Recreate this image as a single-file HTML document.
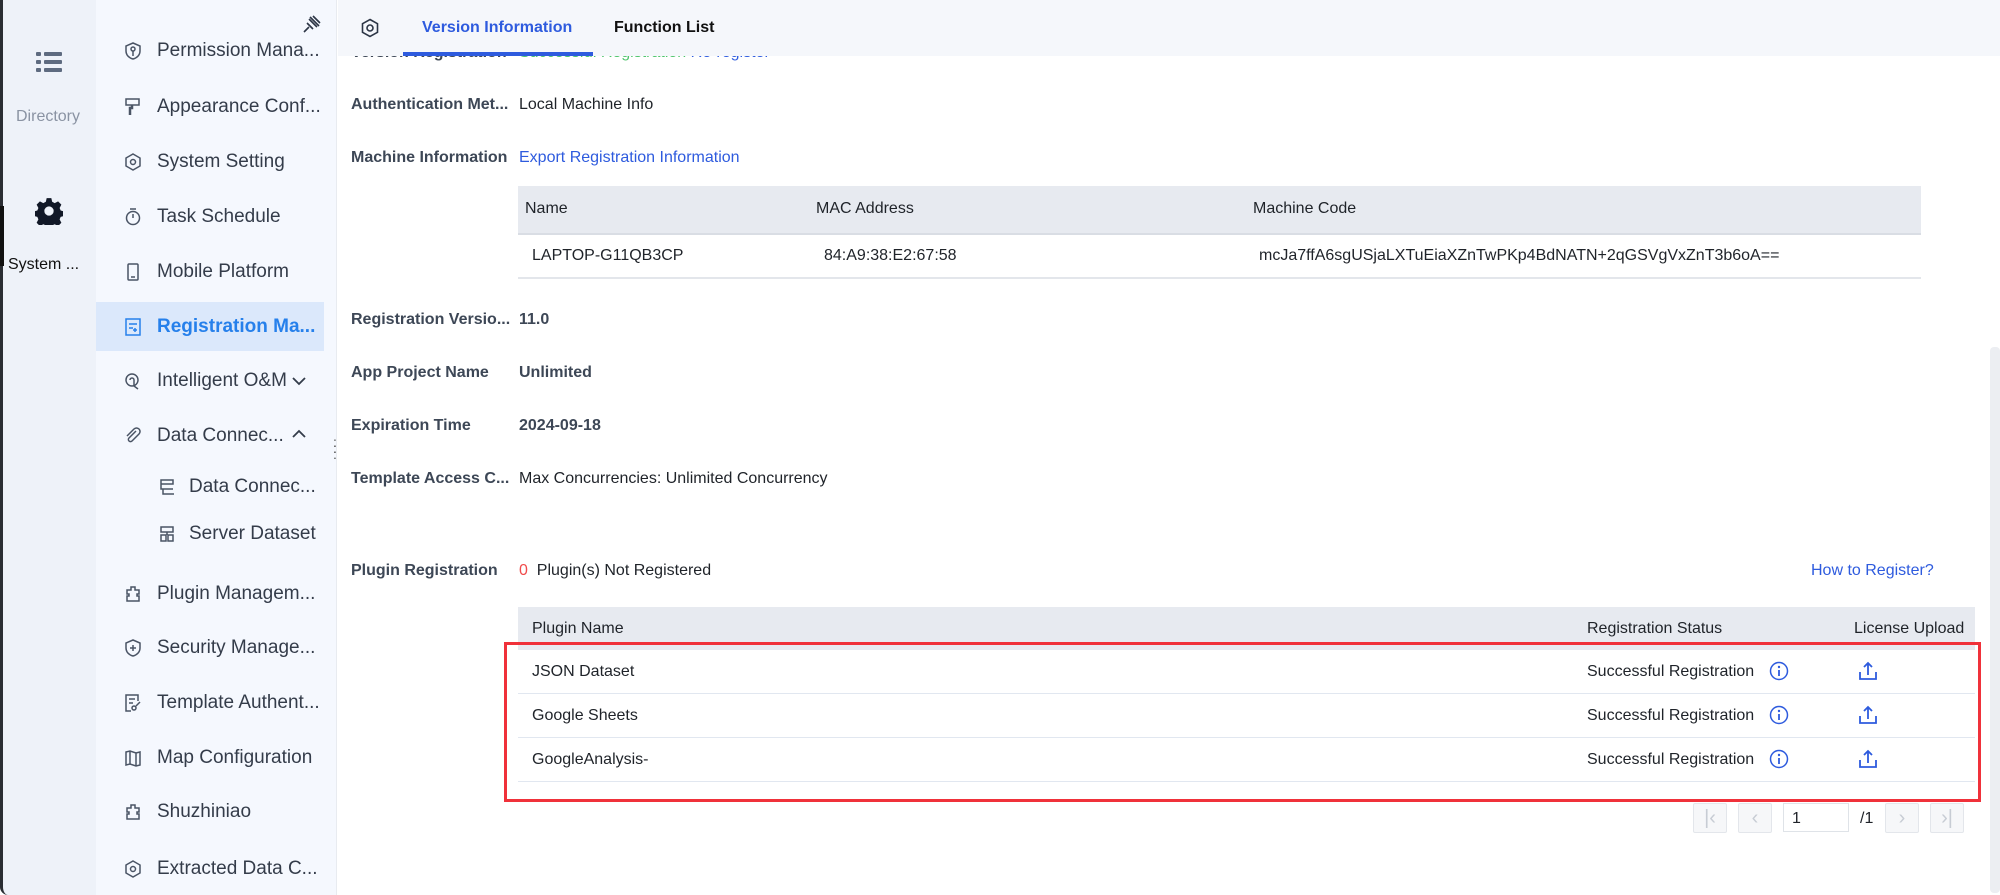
<!DOCTYPE html>
<html><head><meta charset="utf-8"><style>
*{box-sizing:border-box;margin:0;padding:0}
body{width:2000px;height:895px;overflow:hidden;background:#fff;font-family:"Liberation Sans",Arial,sans-serif;position:relative;color:#1f2329}
.abs{position:absolute;white-space:nowrap}
.rail{position:absolute;left:0;top:0;width:96px;height:895px;background:#eef2f9;border-left:3px solid #2a2d33;border-radius:0 0 0 8px}
.side{position:absolute;left:96px;top:0;width:241px;height:895px;background:#f5f8fe;border-right:1px solid #e8ebf0}
.si{position:absolute;left:0;width:241px;height:30px;font-size:19px;color:#343c4a;line-height:30px}
.si .t{position:absolute;left:61px}
.si svg{position:absolute;left:28px;top:6px}
.si.sub .t{left:93px}
.si.sub svg{left:62px}
.top{position:absolute;left:338px;top:0;width:1662px;height:56px;background:#f5f7fb;z-index:2}
.lab{position:absolute;left:351px;font-size:16px;color:#3d4756;font-weight:bold;white-space:nowrap}
.val{position:absolute;left:519px;font-size:16px;color:#1f2329;white-space:nowrap}
.blue{color:#2e5bde}
.th{position:absolute;font-size:16px;color:#1f2329;white-space:nowrap}
.pb{position:absolute;top:803px;width:34px;height:30px;border:1px solid #e3e6eb;background:#f6f7f9;border-radius:2px;color:#c7ccd4;font-size:20px;text-align:center;line-height:28px}
</style></head><body>
<div class="rail">
 <svg class="abs" style="left:33px;top:52px" width="26" height="20" viewBox="0 0 26 20"><g fill="#5e6b80"><rect x="0" y="0" width="5" height="4" rx="1"/><rect x="8" y="0" width="18" height="4" rx="1"/><rect x="0" y="8" width="5" height="4" rx="1"/><rect x="8" y="8" width="18" height="4" rx="1"/><rect x="0" y="16" width="5" height="4" rx="1"/><rect x="8" y="16" width="18" height="4" rx="1"/></g></svg>
 <div class="abs" style="left:13px;top:108px;font-size:16px;color:#8a93a3">Directory</div>
 <div class="abs" style="left:-3px;top:206px;width:4px;height:60px;background:#111"></div>
 <svg class="abs" style="left:32px;top:197px" width="28" height="28" viewBox="0 0 24 24"><path fill="#111827" d="M10 1h4l.7 3.1 2.2 1.1 2.9-1.5 2.8 2.8-1.5 2.9.9 2.2 3 .7v4l-3 .7-.9 2.2 1.5 2.9-2.8 2.8-2.9-1.5-2.2.9-.7 3.1h-4l-.7-3.1-2.2-.9-2.9 1.5-2.8-2.8 1.5-2.9-.9-2.2-3-.7v-4l3-.7.9-2.2-1.5-2.9 2.8-2.8 2.9 1.5 2.2-1.1zM12 8a4 4 0 1 0 0 8 4 4 0 1 0 0-8z"/></svg>
 <div class="abs" style="left:5px;top:256px;font-size:16px;color:#111">System ...</div>
</div>
<div class="side">
 <svg class="abs" style="left:206px;top:14px" width="20" height="20" viewBox="0 0 20 20"><g fill="none" stroke="#2c3545" stroke-width="1.6"><path d="M8 3l9 9M5 9l6 6M7 5l8 8M2 18l5-5M11 2l7 7"/></g></svg>
 <div class="si" style="top:36px"><svg width="18" height="18" viewBox="0 0 18 18"><path d="M9 1l7 3v5c0 4-3 7-7 8-4-1-7-4-7-8V4z" fill="none" stroke="#4a5465" stroke-width="1.5"/><circle cx="9" cy="7" r="2" fill="none" stroke="#4a5465" stroke-width="1.5"/><path d="M9 9v5" stroke="#4a5465" stroke-width="1.5"/></svg><span class="t">Permission Mana...</span></div>
 <div class="si" style="top:92px"><svg width="18" height="18" viewBox="0 0 18 18"><rect x="2" y="1" width="13" height="6" fill="none" stroke="#4a5465" stroke-width="1.5"/><path d="M8 7v3h-2v7" stroke="#4a5465" stroke-width="2.5" fill="none"/></svg><span class="t">Appearance Conf...</span></div>
 <div class="si" style="top:147px"><svg width="18" height="18" viewBox="0 0 18 18"><path d="M9 1l7 4v8l-7 4-7-4V5z" fill="none" stroke="#4a5465" stroke-width="1.5"/><circle cx="9" cy="9" r="2.5" fill="none" stroke="#4a5465" stroke-width="1.5"/></svg><span class="t">System Setting</span></div>
 <div class="si" style="top:202px"><svg width="18" height="18" viewBox="0 0 18 18"><circle cx="9" cy="10" r="6.5" fill="none" stroke="#4a5465" stroke-width="1.5"/><path d="M6 1h6M9 6v4" stroke="#4a5465" stroke-width="1.5"/></svg><span class="t">Task Schedule</span></div>
 <div class="si" style="top:257px"><svg width="18" height="18" viewBox="0 0 18 18"><rect x="4" y="1" width="10" height="16" rx="1" fill="none" stroke="#4a5465" stroke-width="1.5"/><path d="M7 14h4" stroke="#4a5465" stroke-width="1.5"/></svg><span class="t">Mobile Platform</span></div>
 <div style="position:absolute;left:0;top:302px;width:228px;height:49px;background:#dbe8fb"></div>
 <div class="si" style="top:312px;color:#2680eb;font-weight:bold"><svg width="18" height="18" viewBox="0 0 18 18"><rect x="2" y="1" width="14" height="16" fill="none" stroke="#2680eb" stroke-width="1.5"/><path d="M5 6h8M5 10h4M11 10v4M9 12h4" stroke="#2680eb" stroke-width="1.5"/></svg><span class="t">Registration Ma...</span></div>
 <div class="si" style="top:366px"><svg width="18" height="18" viewBox="0 0 18 18"><circle cx="8" cy="8" r="6" fill="none" stroke="#4a5465" stroke-width="1.5"/><path d="M6 8a2 2 0 0 1 4 0v6l4 3" fill="none" stroke="#4a5465" stroke-width="1.5"/></svg><span class="t">Intelligent O&amp;M</span><svg style="left:196px;top:10px" width="14" height="10" viewBox="0 0 14 10"><path d="M1 2l6 6 6-6" fill="none" stroke="#343c4a" stroke-width="1.8"/></svg></div>
 <div class="si" style="top:421px"><svg width="18" height="18" viewBox="0 0 18 18"><path d="M12 4l-7 7a2 2 0 0 0 3 3l7-7a3.5 3.5 0 0 0-5-5l-7 7" fill="none" stroke="#4a5465" stroke-width="1.5"/></svg><span class="t">Data Connec...</span><svg style="left:196px;top:8px" width="14" height="10" viewBox="0 0 14 10"><path d="M1 8l6-6 6 6" fill="none" stroke="#343c4a" stroke-width="1.8"/></svg></div>
 <div class="si sub" style="top:472px"><svg width="18" height="18" viewBox="0 0 18 18"><path d="M3 2h12v4H3zM3 6v5h12M5 11v5h11" fill="none" stroke="#4a5465" stroke-width="1.5"/></svg><span class="t">Data Connec...</span></div>
 <div class="si sub" style="top:519px"><svg width="18" height="18" viewBox="0 0 18 18"><path d="M3 2h12v5H3zM9 7v3M3 10h5v6H3zM10 10h5v6h-5z" fill="none" stroke="#4a5465" stroke-width="1.5"/></svg><span class="t">Server Dataset</span></div>
 <div class="si" style="top:579px"><svg width="18" height="18" viewBox="0 0 18 18"><path d="M7 2h4v3h4v4h-2v2h2v5H3v-5h2V9H3V5h4z" fill="none" stroke="#4a5465" stroke-width="1.5"/></svg><span class="t">Plugin Managem...</span></div>
 <div class="si" style="top:633px"><svg width="18" height="18" viewBox="0 0 18 18"><path d="M9 1l7 3v5c0 4-3 7-7 8-4-1-7-4-7-8V4z M9 6v6M6 9h6" fill="none" stroke="#4a5465" stroke-width="1.5"/></svg><span class="t">Security Manage...</span></div>
 <div class="si" style="top:688px"><svg width="18" height="18" viewBox="0 0 18 18"><path d="M14 7V1H2v16h5M5 5h6M5 9h4" fill="none" stroke="#4a5465" stroke-width="1.5"/><circle cx="10" cy="14" r="2" fill="none" stroke="#4a5465" stroke-width="1.5"/><path d="M12 12l4-4" stroke="#4a5465" stroke-width="1.5"/></svg><span class="t">Template Authent...</span></div>
 <div class="si" style="top:743px"><svg width="18" height="18" viewBox="0 0 18 18"><path d="M2 3l4-1 6 2 4-1v13l-4 1-6-2-4 1zM6 2v13M12 4v13" fill="none" stroke="#4a5465" stroke-width="1.5"/></svg><span class="t">Map Configuration</span></div>
 <div class="si" style="top:797px"><svg width="18" height="18" viewBox="0 0 18 18"><path d="M7 2h4v3h4v4h-2v2h2v5H3v-5h2V9H3V5h4z" fill="none" stroke="#4a5465" stroke-width="1.5"/></svg><span class="t">Shuzhiniao</span></div>
 <div class="si" style="top:854px"><svg width="18" height="18" viewBox="0 0 18 18"><path d="M9 1l7 4v8l-7 4-7-4V5z" fill="none" stroke="#4a5465" stroke-width="1.5"/><circle cx="9" cy="9" r="2.5" fill="none" stroke="#4a5465" stroke-width="1.5"/></svg><span class="t">Extracted Data C...</span></div>
</div>
<div class="abs" style="left:333px;top:439px;font-size:14px;color:#555;line-height:6px;letter-spacing:2px">:<br>:<br>:</div>
<div class="top">
 <svg class="abs" style="left:22px;top:18px" width="20" height="20" viewBox="0 0 20 20"><path d="M10 1.5l7.5 4.2v8.6L10 18.5l-7.5-4.2V5.7z" fill="none" stroke="#2c3545" stroke-width="1.6"/><circle cx="10" cy="10" r="3" fill="none" stroke="#2c3545" stroke-width="1.6"/></svg>
 <div class="abs" style="left:84px;top:19px;font-size:16px;font-weight:bold;color:#2e5bde">Version Information</div>
 <div class="abs" style="left:65px;top:52px;width:190px;height:4px;background:#2e5bde"></div>
 <div class="abs" style="left:276px;top:19px;font-size:16px;font-weight:bold;color:#111">Function List</div>
</div>
<div class="lab" style="top:44px">Version Registration</div>
<div class="val" style="top:44px;color:#4cc46a">Successful Registration <span class="blue">Re-register</span></div>
<div class="lab" style="top:96px">Authentication Met...</div><div class="val" style="top:96px">Local Machine Info</div>
<div class="lab" style="top:149px">Machine Information</div><div class="val blue" style="top:149px">Export Registration Information</div>
<div class="abs" style="left:518px;top:186px;width:1403px;height:49px;background:#e7eaf0;border-bottom:2px solid #d9dde4"></div>
<div class="th" style="left:525px;top:200px">Name</div><div class="th" style="left:816px;top:200px">MAC Address</div><div class="th" style="left:1253px;top:200px">Machine Code</div>
<div class="abs" style="left:518px;top:277px;width:1403px;height:2px;background:#e3e6eb"></div>
<div class="th" style="left:532px;top:247px">LAPTOP-G11QB3CP</div><div class="th" style="left:824px;top:247px">84:A9:38:E2:67:58</div><div class="th" style="left:1259px;top:247px">mcJa7ffA6sgUSjaLXTuEiaXZnTwPKp4BdNATN+2qGSVgVxZnT3b6oA==</div>
<div class="lab" style="top:311px">Registration Versio...</div><div class="val" style="top:311px;font-weight:bold;color:#3d4756">11.0</div>
<div class="lab" style="top:364px">App Project Name</div><div class="val" style="top:364px;font-weight:bold;color:#3d4756">Unlimited</div>
<div class="lab" style="top:417px">Expiration Time</div><div class="val" style="top:417px;font-weight:bold;color:#3d4756">2024-09-18</div>
<div class="lab" style="top:470px">Template Access C...</div><div class="val" style="top:470px">Max Concurrencies: Unlimited Concurrency</div>
<div class="lab" style="top:562px">Plugin Registration</div><div class="val" style="top:562px"><span style="color:#f04b4b">0</span>&nbsp; Plugin(s) Not Registered</div>
<div class="abs blue" style="left:1811px;top:562px;font-size:16px">How to Register?</div>
<div class="abs" style="left:518px;top:607px;width:1457px;height:43px;background:#e7eaf0"></div>
<div class="th" style="left:532px;top:620px">Plugin Name</div><div class="th" style="left:1587px;top:620px">Registration Status</div><div class="th" style="left:1854px;top:620px">License Upload</div>
<div class="abs" style="left:518px;top:693px;width:1457px;height:1px;background:#e1e7f0"></div>
<div class="abs" style="left:518px;top:737px;width:1457px;height:1px;background:#e1e7f0"></div>
<div class="abs" style="left:518px;top:781px;width:1457px;height:1px;background:#e1e7f0"></div>
<div class="th" style="left:532px;top:663px">JSON Dataset</div><div class="th" style="left:532px;top:707px">Google Sheets</div><div class="th" style="left:532px;top:751px">GoogleAnalysis-</div>
<div class="th" style="left:1587px;top:663px">Successful Registration</div><div class="th" style="left:1587px;top:707px">Successful Registration</div><div class="th" style="left:1587px;top:751px">Successful Registration</div>
<svg class="abs" style="left:1769px;top:661px" width="20" height="20" viewBox="0 0 20 20"><circle cx="10" cy="10" r="8.5" fill="none" stroke="#2e5bde" stroke-width="1.5"/><circle cx="10" cy="6" r="1.2" fill="#2e5bde"/><path d="M10 9v6" stroke="#2e5bde" stroke-width="1.8"/></svg>
<svg class="abs" style="left:1769px;top:705px" width="20" height="20" viewBox="0 0 20 20"><circle cx="10" cy="10" r="8.5" fill="none" stroke="#2e5bde" stroke-width="1.5"/><circle cx="10" cy="6" r="1.2" fill="#2e5bde"/><path d="M10 9v6" stroke="#2e5bde" stroke-width="1.8"/></svg>
<svg class="abs" style="left:1769px;top:749px" width="20" height="20" viewBox="0 0 20 20"><circle cx="10" cy="10" r="8.5" fill="none" stroke="#2e5bde" stroke-width="1.5"/><circle cx="10" cy="6" r="1.2" fill="#2e5bde"/><path d="M10 9v6" stroke="#2e5bde" stroke-width="1.8"/></svg>
<svg class="abs" style="left:1858px;top:661px" width="20" height="20" viewBox="0 0 20 20"><path d="M2 11v7h16v-7M10 14V2M6 6l4-4 4 4" fill="none" stroke="#2e5bde" stroke-width="1.8"/></svg>
<svg class="abs" style="left:1858px;top:705px" width="20" height="20" viewBox="0 0 20 20"><path d="M2 11v7h16v-7M10 14V2M6 6l4-4 4 4" fill="none" stroke="#2e5bde" stroke-width="1.8"/></svg>
<svg class="abs" style="left:1858px;top:749px" width="20" height="20" viewBox="0 0 20 20"><path d="M2 11v7h16v-7M10 14V2M6 6l4-4 4 4" fill="none" stroke="#2e5bde" stroke-width="1.8"/></svg>
<div class="abs" style="left:504px;top:642px;width:1477px;height:160px;border:3px solid #f0313a"></div>
<div class="pb" style="left:1693px">|&lsaquo;</div>
<div class="pb" style="left:1738px">&lsaquo;</div>
<div class="abs" style="left:1783px;top:803px;width:66px;height:29px;border:1px solid #dfe3e8;background:#fff;font-size:16px;padding:6px 0 0 8px">1</div>
<div class="abs" style="left:1860px;top:810px;font-size:16px">/1</div>
<div class="pb" style="left:1885px">&rsaquo;</div>
<div class="pb" style="left:1930px">&rsaquo;|</div>
<div class="abs" style="left:1990px;top:347px;width:10px;height:546px;background:#eceef2;border-radius:4px"></div>
</body></html>
